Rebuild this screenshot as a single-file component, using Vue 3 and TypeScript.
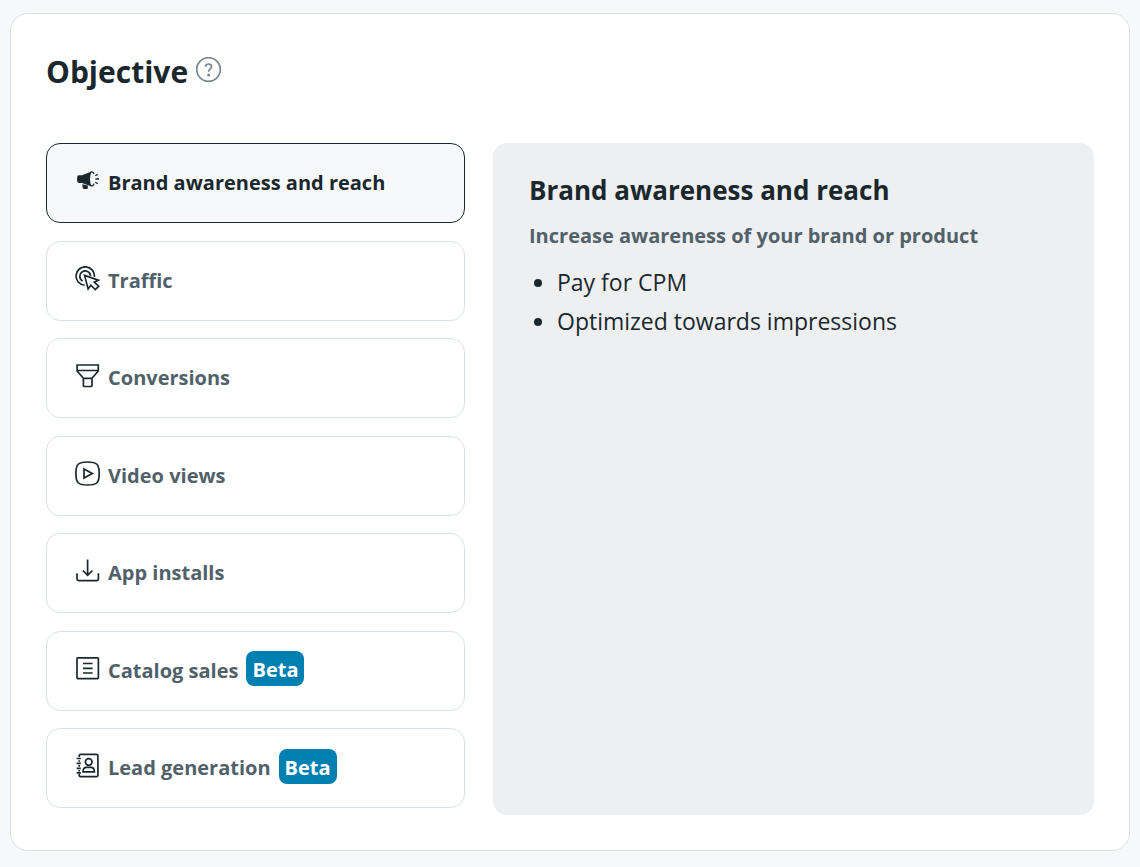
<script setup lang="ts">
import { computed, ref } from 'vue'

type IconName = 'megaphone' | 'click' | 'funnel' | 'video' | 'download' | 'catalog' | 'contact'

interface Objective {
  icon: IconName
  label: string
  beta?: boolean
  summary: string
  points: string[]
}

const objectives: Objective[] = [
  {
    icon: 'megaphone',
    label: 'Brand awareness and reach',
    summary: 'Increase awareness of your brand or product',
    points: ['Pay for CPM', 'Optimized towards impressions'],
  },
  { icon: 'click', label: 'Traffic', summary: '', points: [] },
  { icon: 'funnel', label: 'Conversions', summary: '', points: [] },
  { icon: 'video', label: 'Video views', summary: '', points: [] },
  { icon: 'download', label: 'App installs', summary: '', points: [] },
  { icon: 'catalog', label: 'Catalog sales', beta: true, summary: '', points: [] },
  { icon: 'contact', label: 'Lead generation', beta: true, summary: '', points: [] },
]

const selected = ref(0)
const current = computed(() => objectives[selected.value])
</script>

<template>
  <main class="page">
    <section class="card">
      <header class="heading">
        <h1 class="title">Objective</h1>
        <button class="help" type="button" aria-label="About objectives">
          <svg viewBox="0 0 26 26" aria-hidden="true">
            <circle cx="12.5" cy="12.5" r="11.8" />
            <path d="M9.6 9.8C9.6 8 10.8 7 12.6 7S15.6 8.1 15.6 9.6C15.6 11.8 12.6 12 12.6 14.8" />
            <circle class="dot" cx="12.6" cy="17.9" r="1.5" />
          </svg>
        </button>
      </header>

      <div class="columns">
        <div class="options">
          <button
            v-for="(item, index) in objectives"
            :key="item.label"
            type="button"
            class="option"
            :class="{ selected: index === selected }"
            :aria-pressed="index === selected"
            @click="selected = index"
          >
            <svg class="icon" viewBox="0 0 26 26" aria-hidden="true">
              <g v-if="item.icon === 'megaphone'">
                <path class="solid" d="M2.4 7.9Q2.8 7.2 3.8 7.2H7L16.6 3.4Q15 7 15 11Q15 15 16.6 18.5L7 14.9H3.8Q2.8 14.9 2.4 14.1Q1.6 11 2.4 7.9Z" />
                <path class="solid" d="M7.2 16.2L12.8 17.4V20Q12.8 21 11.8 21H9Q8 21 7.8 20Z" />
                <path class="fine" d="M15.6 4.2Q18.4 3.2 18.9 6.2M18.9 15.7Q18.4 18.7 15.6 17.7M20.2 7.8L22.8 6.4M20.4 11H24M20.2 14.2L22.8 15.6" />
              </g>
              <g v-else-if="item.icon === 'click'">
                <path d="M9.6 19.2A9.2 9.2 0 1 1 19.4 10.9M7.6 15A5.4 5.4 0 1 1 15.6 9.9" />
                <path d="M9.6 9.4L13.1 22.9L15.9 19.2L20.3 23.6L23.7 20.2L19.3 16.2L23.3 14.2Z" />
              </g>
              <g v-else-if="item.icon === 'funnel'">
                <path d="M2.1 2H23.3V8L17 15.2V22.5Q17 23.5 16 23.5H9.4Q8.4 23.5 8.4 22.5V15.2L2.1 8ZM2.1 7.5H23.3M8.4 15.4H17" />
              </g>
              <g v-else-if="item.icon === 'video'">
                <path d="M12.5 1C22 1 24.2 3.2 24.2 12.5S22 24 12.5 24S.9 21.8 .9 12.5S3 1 12.5 1Z" />
                <path d="M9 8L17.3 12.5L9 17Z" />
              </g>
              <g v-else-if="item.icon === 'download'">
                <path d="M12.6 1.6V17.2M7.8 12.5L12.6 17.3L17.4 12.5M2 15.2V21Q2 22.6 3.6 22.6H21.8Q23.4 22.6 23.4 21V15.2" />
              </g>
              <g v-else-if="item.icon === 'catalog'">
                <path d="M3 1.8H22.4Q23.4 1.8 23.4 2.8V21.6Q23.4 22.6 22.4 22.6H3Q2 22.6 2 21.6V2.8Q2 1.8 3 1.8ZM8 7.5H17.6M8 12.3H17.6M8 17H17.6" />
              </g>
              <g v-else>
                <path d="M4.2 4V2.8Q4.2 1.3 5.7 1.3H21.4Q22.9 1.3 22.9 2.8V22.2Q22.9 23.7 21.4 23.7H5.7Q4.2 23.7 4.2 22.2V21M4.2 7.2V8.8M4.2 12V13.8M4.2 17V18.4M1.6 5.5H5.8M1.6 10.4H5.8M1.6 15.4H5.8M1.6 19.8H5.8" />
                <circle cx="13.7" cy="9" r="3.3" />
                <path d="M8 18.8Q8 14.3 11.6 14.3H15.8Q19.4 14.3 19.4 18.8Z" />
              </g>
            </svg>
            <span class="label">{{ item.label }}</span>
            <span v-if="item.beta" class="badge">Beta</span>
          </button>
        </div>

        <article class="details">
          <h2 class="details-title">{{ current.label }}</h2>
          <p v-if="current.summary" class="summary">{{ current.summary }}</p>
          <ul v-if="current.points.length" class="points">
            <li v-for="point in current.points" :key="point">{{ point }}</li>
          </ul>
        </article>
      </div>
    </section>
  </main>
</template>

<style>
body {
  margin: 0;
  background: #f6f8fa;
}
</style>

<style scoped>
.page {
  box-sizing: border-box;
  padding: 13px 10px 16px;
  min-height: 100vh;
  color: #1a282d;
  font-family: 'Segoe UI', 'Open Sans', sans-serif;
}

.card {
  box-sizing: border-box;
  padding: 35px;
  border: 1px solid #dbe2e7;
  border-radius: 18px;
  background: #fff;
}

.heading {
  display: flex;
  align-items: center;
  gap: 8px;
  height: 46px;
  margin-bottom: 48px;
}

.title {
  margin: 0;
  font-size: 30px;
  line-height: 46px;
  font-weight: 700;
}

.help {
  width: 26px;
  height: 26px;
  margin-bottom: 4px;
  padding: 0;
  border: 0;
  background: none;
  cursor: pointer;
}

.help svg {
  display: block;
  width: 26px;
  height: 26px;
  fill: none;
  stroke: #75858f;
  stroke-width: 1.7;
}

.help .dot {
  fill: #75858f;
  stroke: none;
}

.columns {
  display: grid;
  grid-template-columns: minmax(0, 419fr) minmax(0, 601fr);
  gap: 28px;
  min-height: 672px;
}

.options {
  display: flex;
  flex-direction: column;
  justify-content: space-between;
  padding-bottom: 7px;
}

.option {
  display: flex;
  align-items: center;
  min-height: 80px;
  padding: 0 28px;
  border: 1px solid #dbe2e7;
  border-radius: 14px;
  background: #fff;
  color: #51616a;
  font-family: inherit;
  font-size: 20px;
  line-height: 28px;
  font-weight: 700;
  text-align: left;
  cursor: pointer;
}

.option.selected {
  border-color: #1a282d;
  background: #f6f8fa;
  color: #1a282d;
}

.icon {
  flex: none;
  width: 26px;
  height: 26px;
  margin: 0 7px 4px 0;
  fill: none;
  stroke: #1a282d;
  stroke-width: 1.7;
}

.icon .solid {
  fill: #1a282d;
  stroke: none;
}

.icon .fine {
  stroke-width: 1.3;
}

.badge {
  margin: 0 0 4px 8px;
  padding: 5px 6px 2px;
  border-radius: 8px;
  background: #007fb1;
  color: #fff;
}

.details {
  padding: 28px 36px;
  border-radius: 14px;
  background: #eeeff1;
}

.details-title {
  margin: 0 0 8px;
  font-size: 26px;
  line-height: 38px;
  font-weight: 700;
}

.summary {
  margin: 0 0 8px;
  color: #51616a;
  font-size: 20px;
  line-height: 38px;
  font-weight: 700;
}

.points {
  margin: 0;
  padding-left: 28px;
  font-size: 23px;
  line-height: 39px;
}
</style>
